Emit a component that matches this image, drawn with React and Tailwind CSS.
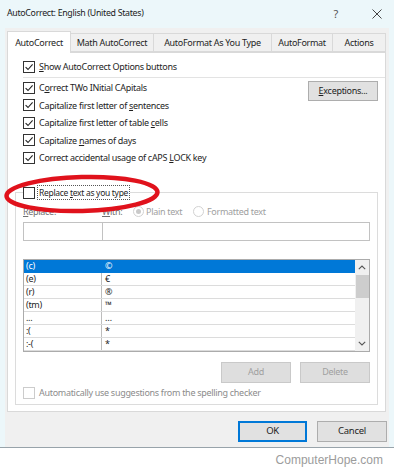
import React from 'react';

const Check = ({ checked, disabled }) => (
    <span className={`w-[12px] h-[12px] border bg-white flex items-center justify-center shrink-0 ${disabled ? 'border-[#cccccc]' : 'border-[#333333]'}`}>
        {checked && (
            <svg width="10" height="10" viewBox="0 0 10 10">
                <path d="M1.6 5.1 L4 7.5 L8.6 2.3" fill="none" stroke="#222" strokeWidth="1.1" />
            </svg>
        )}
    </span>
);

const Radio = ({ selected }) => (
    <span className="w-[11px] h-[11px] rounded-full border border-[#d2d2d2] bg-white flex items-center justify-center shrink-0">
        {selected && <span className="w-[5px] h-[5px] rounded-full bg-[#c9c9c9]" />}
    </span>
);

const Row = ({ children, checked = true }) => (
    <div className="flex items-center gap-[4px] h-[17.5px]">
        <Check checked={checked} />
        <span>{children}</span>
    </div>
);

const entries = [
    ['(c)', '©'],
    ['(e)', '€'],
    ['(r)', '®'],
    ['(tm)', '™'],
    ['...', '…'],
    [':(', '*'],
    [':-(', '*'],
];

export default function App() {
    return (
        <div className="w-[394px] h-[469px] bg-white overflow-hidden relative font-['Noto_Sans',sans-serif] text-[9px] text-[#1e1e1e] tracking-[-0.3px]">
            {/* Window */}
            <div className="h-[448px] bg-[#ecf7fa] border-b border-[#98a3aa] flex flex-col">
                {/* Title bar */}
                <div className="h-[28px] flex items-center justify-between pl-[7px] pr-[12px] shrink-0">
                    <span className="text-[8.8px] text-[#1a1a1a]">AutoCorrect: English (United States)</span>
                    <div className="flex items-center gap-[34px]">
                        <span className="text-[11px] text-[#555]">?</span>
                        <svg width="10" height="10" viewBox="0 0 10 10">
                            <path d="M0.5 0.5 L9.5 9.5 M9.5 0.5 L0.5 9.5" stroke="#444" strokeWidth="1" />
                        </svg>
                    </div>
                </div>

                {/* Body */}
                <div className="flex-1 mx-[5px] bg-[#f0f0f0] pl-[2px] pr-[3px] pt-[3px] flex flex-col">
                    {/* Tabs */}
                    <div className="flex items-end h-[21px] shrink-0">
                        <div className="w-[64px] h-[22px] -mb-px bg-white border border-b-0 border-[#d9d9d9] flex items-center justify-center relative z-10">AutoCorrect</div>
                        <div className="w-[83px] h-[19px] border-y border-r border-[#d9d9d9] flex items-center justify-center">Math AutoCorrect</div>
                        <div className="w-[118px] h-[19px] border-y border-r border-[#d9d9d9] flex items-center justify-center">AutoFormat As You Type</div>
                        <div className="w-[61px] h-[19px] border-y border-r border-[#d9d9d9] flex items-center justify-center">AutoFormat</div>
                        <div className="w-[53px] h-[19px] border-y border-r border-[#d9d9d9] flex items-center justify-center">Actions</div>
                    </div>

                    {/* Panel */}
                    <div className="h-[360px] bg-white border border-[#d9d9d9] pt-[5px] flex flex-col shrink-0">
                        <div className="pl-[15px] h-[18px] flex items-center gap-[4px]">
                            <Check checked />
                            <span><u className="underline-offset-1">S</u>how AutoCorrect Options buttons</span>
                        </div>
                        <div className="ml-[15px] mt-px h-px bg-[#e3e3e3]" />
                        <div className="flex justify-between pl-[15px] pr-[7px] mt-px">
                            <div className="flex flex-col">
                                <Row>C<u>o</u>rrect TWo INitial CApitals</Row>
                                <Row>Capitalize first letter of <u>s</u>entences</Row>
                                <Row>Capitalize first letter of table <u>c</u>ells</Row>
                                <Row>Capitalize <u>n</u>ames of days</Row>
                                <Row>Correct accidental usage of cAPS <u>L</u>OCK key</Row>
                            </div>
                            <button className="mt-[2px] w-[70px] h-[20px] bg-[#e1e1e1] border border-[#adadad] flex items-center justify-center">
                                <span><u>E</u>xceptions...</span>
                            </button>
                        </div>

                        {/* Replace group */}
                        <fieldset className="mt-[18px] mx-[7px] border border-[#dcdcdc] px-[7px] pb-[5px]">
                            <legend className="flex items-center gap-[2px] h-[16px]">
                                <Check />
                                <span className="border border-dotted border-[#555] px-px leading-[13px] text-[8.5px]">Replace <u>t</u>ext as you type</span>
                            </legend>
                            <div className="flex items-center h-[14px] mt-[4px] text-[#a0a0a0]">
                                <span className="w-[79px] text-[#707070]"><u>R</u>eplace:</span>
                                <span className="w-[31px] text-[#707070]"><u>W</u>ith:</span>
                                <div className="w-[60px] flex items-center gap-[2px]">
                                    <Radio selected />
                                    <span>Plain text</span>
                                </div>
                                <div className="flex items-center gap-[3px]">
                                    <Radio />
                                    <span>Formatted text</span>
                                </div>
                            </div>
                            <div className="flex mt-[3px] h-[19px]">
                                <div className="w-[80px] border border-[#c2c2c2] bg-white" />
                                <div className="flex-1 -ml-px border border-[#c2c2c2] bg-white" />
                            </div>

                            {/* List */}
                            <div className="mt-[18px] border border-[#ababab] flex h-[93px]">
                                <div className="flex-1 flex flex-col">
                                    {entries.map(([a, b], i) => (
                                        <div key={i} className={`flex h-[13px] items-center ${i === 0 ? 'bg-[#0078d7] text-white' : 'border-b border-[#dcdcdc]'}`}>
                                            <span className={`w-[78px] h-full flex items-center pl-[2px] border-r ${i === 0 ? 'border-[#0078d7]' : 'border-[#bdbdbd]'}`}>{a}</span>
                                            <span className="pl-[3px]">{b}</span>
                                        </div>
                                    ))}
                                </div>
                                <div className="w-[14px] bg-[#f0f0f0] flex flex-col items-center">
                                    <div className="h-[15px] flex items-center justify-center">
                                        <svg width="8" height="5" viewBox="0 0 8 5"><path d="M0.8 4.2 L4 1 L7.2 4.2" fill="none" stroke="#555" strokeWidth="1.1" /></svg>
                                    </div>
                                    <div className="w-[13px] h-[23px] bg-[#cdcdcd]" />
                                    <div className="flex-1" />
                                    <div className="h-[15px] flex items-center justify-center">
                                        <svg width="8" height="5" viewBox="0 0 8 5"><path d="M0.8 0.8 L4 4 L7.2 0.8" fill="none" stroke="#555" strokeWidth="1.1" /></svg>
                                    </div>
                                </div>
                            </div>

                            <div className="flex justify-end gap-[9px] mt-[10px]">
                                <button className="w-[70px] h-[21px] bg-[#dedede] border border-[#c9c9c9] text-[#a0a0a0]">Add</button>
                                <button className="w-[70px] h-[21px] bg-[#dedede] border border-[#c9c9c9] text-[#a0a0a0]">Delete</button>
                            </div>
                            <div className="flex items-center gap-[4px] mt-[4px] h-[12px] text-[#8c8c8c]">
                                <Check disabled />
                                <span>Automatically use suggestions from the spelling checker</span>
                            </div>
                        </fieldset>
                    </div>

                    {/* Dialog buttons */}
                    <div className="flex justify-end gap-[10px] mt-[9px]">
                        <button className="w-[69px] h-[21px] bg-[#e1e1e1] border-2 border-[#0078d7] text-[9.5px]">OK</button>
                        <button className="w-[70px] h-[21px] bg-[#e1e1e1] border border-[#adadad] text-[9.5px] -mr-px">Cancel</button>
                    </div>
                </div>
            </div>

            <div className="flex justify-end pr-[11px] pt-[3px]">
                <span className="font-['Liberation_Sans',sans-serif] text-[12px] tracking-normal text-[#9c9c9c]">ComputerHope.com</span>
            </div>

            {/* Red annotation ellipse */}
            <svg className="absolute left-0 top-[170px] pointer-events-none" width="170" height="50" viewBox="0 0 170 50">
                <ellipse cx="82" cy="24" rx="75.5" ry="17" fill="none" stroke="#e0121c" strokeWidth="4.5" transform="rotate(-1.5 82 24)" />
            </svg>
        </div>
    );
}
